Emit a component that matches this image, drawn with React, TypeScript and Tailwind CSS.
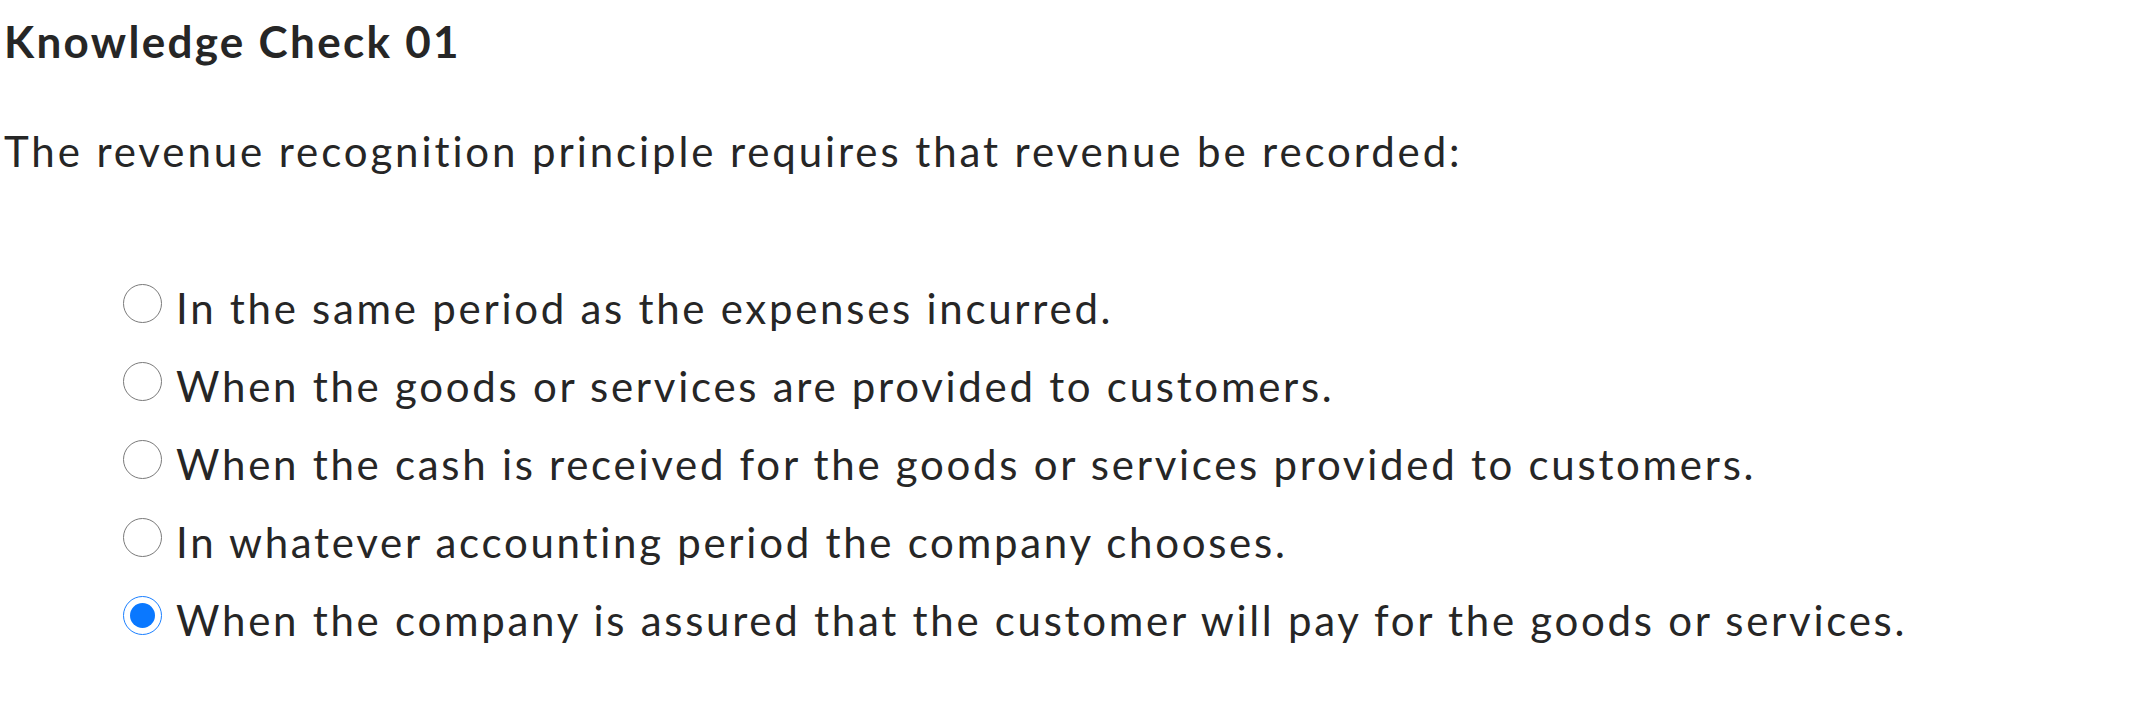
const options = [
  'In the same period as the expenses incurred.',
  'When the goods or services are provided to customers.',
  'When the cash is received for the goods or services provided to customers.',
  'In whatever accounting period the company chooses.',
  'When the company is assured that the customer will pay for the goods or services.',
];

function Radio({ checked }: { checked: boolean }) {
  if (checked) {
    return (
      <span className="mt-[15px] flex h-[39px] w-[39px] shrink-0 items-center justify-center rounded-full border-[1.5px] border-[#1a7fff] bg-white">
        <span className="h-[25px] w-[25px] rounded-full bg-[#0a78ff]" />
      </span>
    );
  }
  return (
    <span className="mt-[15px] h-[39px] w-[39px] shrink-0 rounded-full border border-[#7a7a7a] bg-white" />
  );
}

export default function App() {
  const selected = 4;

  return (
    <div
      className="min-h-[728px] w-[2140px] bg-white pl-[4px] pt-[11px] text-[#262626]"
      style={{ fontFamily: 'Lato, "Open Sans", sans-serif', fontVariantLigatures: 'none' }}
    >
      <h1 className="text-[44px] font-bold leading-[60px] tracking-[2.3px]">Knowledge Check 01</h1>

      <p className="mt-[50px] text-[42px] leading-[60px] tracking-[2.9px]">
        The revenue recognition principle requires that revenue be recorded:
      </p>

      <div className="mt-[88px] pl-[119px]">
        {options.map((opt, i) => (
          <label key={i} className="flex h-[78px] items-start gap-[14px]">
            <Radio checked={i === selected} />
            <span className="text-[42px] leading-[78px] tracking-[2.72px]">{opt}</span>
          </label>
        ))}
      </div>
    </div>
  );
}
